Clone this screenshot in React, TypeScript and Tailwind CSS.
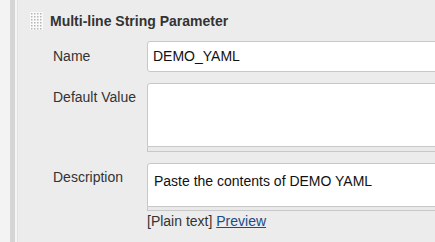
import React from "react";

function Handle() {
  const dots: JSX.Element[] = [];
  for (let r = 0; r < 6; r++) {
    for (let c = 0; c < 4; c++) {
      dots.push(<rect key={`${r}-${c}`} x={1 + c * 3} y={1 + r * 3} width={1.5} height={1.5} fill="#b5b5b5" />);
    }
  }
  return (
    <svg width="13" height="18" viewBox="0 0 13 18" className="block">
      <rect x="0" y="0" width="13" height="18" fill="#fafafa" />
      {dots}
    </svg>
  );
}

export default function App() {
  return (
    <div className="flex h-[242px] w-[435px] overflow-hidden bg-[#ececec] text-[#333] [font-family:'Liberation_Sans',Arial,sans-serif]">
      <div className="w-[10px] shrink-0 bg-[#f3f3f3]" />
      <div className="w-[5px] shrink-0 bg-[#d5d5d5]" />
      <div className="w-[2px] shrink-0 bg-[#f5f5f5]" />
      <div className="w-[1px] shrink-0 bg-[#e2e2e2]" />
      <div className="flex min-w-0 flex-1 flex-col bg-[#ececec] pt-[12px]">
        <div className="flex items-center pl-[12px]">
          <Handle />
          <span className="ml-[7px] text-[14px] font-bold leading-[18px] text-[#333]">Multi-line String Parameter</span>
        </div>
        <div className="mt-[11px] grid grid-cols-[94px_300px] gap-y-[11px] pl-[35px] text-[14px]">
          <div className="flex h-[31px] items-center text-[#333]">Name</div>
          <div className="flex h-[31px] items-center rounded-[3px] border border-[#c8c8c8] bg-white pl-[5px] text-[#111]">DEMO_YAML</div>

          <div className="pt-[6px] leading-[16px] text-[#333]">Default Value</div>
          <div className="flex flex-col">
            <div className="h-[64px] rounded-t-[3px] border border-[#c8c8c8] bg-white" />
            <div className="h-[5px] border-x border-b border-[#c8c8c8] bg-[#e9e9e9]" />
          </div>

          <div className="pt-[6px] leading-[16px] text-[#333]">Description</div>
          <div className="flex flex-col">
            <div className="h-[44px] rounded-t-[3px] border border-[#c8c8c8] bg-white pl-[6px] pt-[8px] leading-[18px] text-[#111]">Paste the contents of DEMO YAML</div>
            <div className="h-[4px] border-x border-b border-[#c8c8c8] bg-[#e9e9e9]" />
            <div className="mt-[1px] leading-[18px] text-[#333]">
              [Plain text] <span className="text-[#204a87] underline">Preview</span>
            </div>
          </div>
        </div>
      </div>
    </div>
  );
}
